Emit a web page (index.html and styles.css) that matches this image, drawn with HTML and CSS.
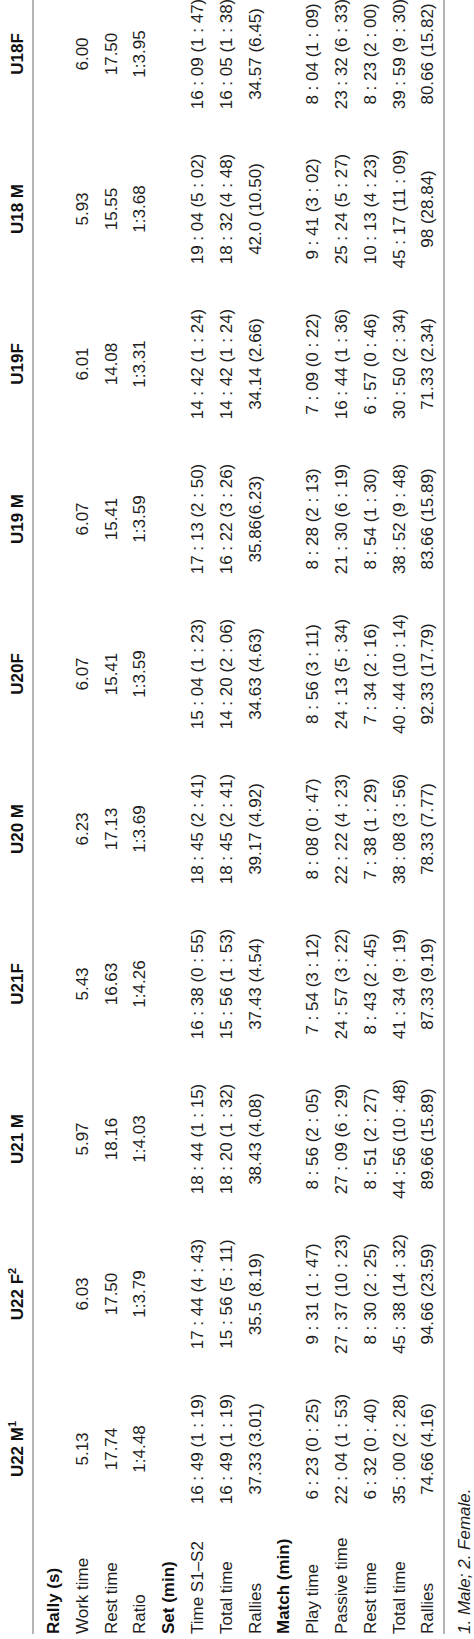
FILE: index.html
```html
<!DOCTYPE html>
<html lang="en">
<head>
<meta charset="utf-8">
<title>Rally, set and match durations by category</title>
<link rel="stylesheet" href="styles.css">
</head>
<body>
<div class="page">
  <div class="rotated">
    <table class="stats">
      <colgroup>
        <col class="col-label">
        <col class="col-group"><col class="col-group"><col class="col-group"><col class="col-group"><col class="col-group">
        <col class="col-group"><col class="col-group"><col class="col-group"><col class="col-group"><col class="col-group">
      </colgroup>
      <thead>
        <tr>
          <th class="corner"></th>
          <th>U22 M<sup>1</sup></th>
          <th>U22 F<sup>2</sup></th>
          <th>U21 M</th>
          <th>U21F</th>
          <th>U20 M</th>
          <th>U20F</th>
          <th>U19 M</th>
          <th>U19F</th>
          <th>U18 M</th>
          <th>U18F</th>
        </tr>
      </thead>
      <tbody>
        <tr class="section">
          <td class="row-label"><b>Rally (s)</b></td>
          <td></td><td></td><td></td><td></td><td></td><td></td><td></td><td></td><td></td><td></td>
        </tr>
        <tr>
          <td class="row-label">Work time</td>
          <td>5.13</td><td>6.03</td><td>5.97</td><td>5.43</td><td>6.23</td><td>6.07</td><td>6.07</td><td>6.01</td><td>5.93</td><td>6.00</td>
        </tr>
        <tr>
          <td class="row-label">Rest time</td>
          <td>17.74</td><td>17.50</td><td>18.16</td><td>16.63</td><td>17.13</td><td>15.41</td><td>15.41</td><td>14.08</td><td>15.55</td><td>17.50</td>
        </tr>
        <tr>
          <td class="row-label">Ratio</td>
          <td>1:4.48</td><td>1:3.79</td><td>1:4.03</td><td>1:4.26</td><td>1:3.69</td><td>1:3.59</td><td>1:3.59</td><td>1:3.31</td><td>1:3.68</td><td>1:3.95</td>
        </tr>
        <tr class="section">
          <td class="row-label"><b>Set (min)</b></td>
          <td></td><td></td><td></td><td></td><td></td><td></td><td></td><td></td><td></td><td></td>
        </tr>
        <tr>
          <td class="row-label">Time S1–S2</td>
          <td>16 : 49 (1 : 19)</td><td>17 : 44 (4 : 43)</td><td>18 : 44 (1 : 15)</td><td>16 : 38 (0 : 55)</td><td>18 : 45 (2 : 41)</td><td>15 : 04 (1 : 23)</td><td>17 : 13 (2 : 50)</td><td>14 : 42 (1 : 24)</td><td>19 : 04 (5 : 02)</td><td>16 : 09 (1 : 47)</td>
        </tr>
        <tr>
          <td class="row-label">Total time</td>
          <td>16 : 49 (1 : 19)</td><td>15 : 56 (5 : 11)</td><td>18 : 20 (1 : 32)</td><td>15 : 56 (1 : 53)</td><td>18 : 45 (2 : 41)</td><td>14 : 20 (2 : 06)</td><td>16 : 22 (3 : 26)</td><td>14 : 42 (1 : 24)</td><td>18 : 32 (4 : 48)</td><td>16 : 05 (1 : 38)</td>
        </tr>
        <tr>
          <td class="row-label">Rallies</td>
          <td>37.33 (3.01)</td><td>35.5 (8.19)</td><td>38.43 (4.08)</td><td>37.43 (4.54)</td><td>39.17 (4.92)</td><td>34.63 (4.63)</td><td>35.86(6.23)</td><td>34.14 (2.66)</td><td>42.0 (10.50)</td><td>34.57 (6.45)</td>
        </tr>
        <tr class="section">
          <td class="row-label"><b>Match (min)</b></td>
          <td></td><td></td><td></td><td></td><td></td><td></td><td></td><td></td><td></td><td></td>
        </tr>
        <tr>
          <td class="row-label">Play time</td>
          <td>6 : 23 (0 : 25)</td><td>9 : 31 (1 : 47)</td><td>8 : 56 (2 : 05)</td><td>7 : 54 (3 : 12)</td><td>8 : 08 (0 : 47)</td><td>8 : 56 (3 : 11)</td><td>8 : 28 (2 : 13)</td><td>7 : 09 (0 : 22)</td><td>9 : 41 (3 : 02)</td><td>8 : 04 (1 : 09)</td>
        </tr>
        <tr>
          <td class="row-label">Passive time</td>
          <td>22 : 04 (1 : 53)</td><td>27 : 37 (10 : 23)</td><td>27 : 09 (6 : 29)</td><td>24 : 57 (3 : 22)</td><td>22 : 22 (4 : 23)</td><td>24 : 13 (5 : 34)</td><td>21 : 30 (6 : 19)</td><td>16 : 44 (1 : 36)</td><td>25 : 24 (5 : 27)</td><td>23 : 32 (6 : 33)</td>
        </tr>
        <tr>
          <td class="row-label">Rest time</td>
          <td>6 : 32 (0 : 40)</td><td>8 : 30 (2 : 25)</td><td>8 : 51 (2 : 27)</td><td>8 : 43 (2 : 45)</td><td>7 : 38 (1 : 29)</td><td>7 : 34 (2 : 16)</td><td>8 : 54 (1 : 30)</td><td>6 : 57 (0 : 46)</td><td>10 : 13 (4 : 23)</td><td>8 : 23 (2 : 00)</td>
        </tr>
        <tr>
          <td class="row-label">Total time</td>
          <td>35 : 00 (2 : 28)</td><td>45 : 38 (14 : 32)</td><td>44 : 56 (10 : 48)</td><td>41 : 34 (9 : 19)</td><td>38 : 08 (3 : 56)</td><td>40 : 44 (10 : 14)</td><td>38 : 52 (9 : 48)</td><td>30 : 50 (2 : 34)</td><td>45 : 17 (11 : 09)</td><td>39 : 59 (9 : 30)</td>
        </tr>
        <tr>
          <td class="row-label">Rallies</td>
          <td>74.66 (4.16)</td><td>94.66 (23.59)</td><td>89.66 (15.89)</td><td>87.33 (9.19)</td><td>78.33 (7.77)</td><td>92.33 (17.79)</td><td>83.66 (15.89)</td><td>71.33 (2.34)</td><td>98 (28.84)</td><td>80.66 (15.82)</td>
        </tr>
      </tbody>
    </table>
    <p class="note">1. Male; 2. Female.</p>
  </div>
</div>
</body>
</html>
```

FILE: styles.css
```css
html,
body {
  margin: 0;
  padding: 0;
  background: #ffffff;
}

body {
  font-family: "Liberation Sans", Arial, Helvetica, sans-serif;
  color: #1e1e1e;
}

.page {
  width: 474px;
  height: 1639px;
  overflow: hidden;
}

/* The table is typeset landscape and turned a quarter turn counter-clockwise */
.rotated {
  width: 1680px;
  transform-origin: 0 0;
  transform: translateY(1639px) rotate(-90deg);
}

.stats {
  margin-left: 5px;
  border-collapse: collapse;
  table-layout: fixed;
  width: 1657.5px;
  font-size: 17px;
}

.col-label {
  width: 107.5px;
}

.col-group {
  width: 155px;
}

.stats th {
  height: 28px;
  padding: 4px 0 0;
  line-height: 28px;
  font-weight: bold;
  text-align: center;
  white-space: nowrap;
  border-bottom: 2px solid #b4b4b4;
  color: #111;
}

.stats th sup {
  font-size: 11px;
  line-height: 0;
  vertical-align: 7px;
}

.stats td {
  height: 28.8px;
  padding: 0;
  line-height: 28.8px;
  text-align: center;
  white-space: nowrap;
}

.stats td.row-label {
  text-align: left;
}

.stats td b {
  color: #111;
}

.stats tbody tr:first-child td {
  padding-top: 6px;
}

.stats tbody tr:last-child td {
  border-bottom: 2px solid #b4b4b4;
}

.note {
  margin: 10px 0 0 5px;
  font-size: 17px;
  line-height: 20px;
  font-style: italic;
  color: #1e1e1e;
}
```
